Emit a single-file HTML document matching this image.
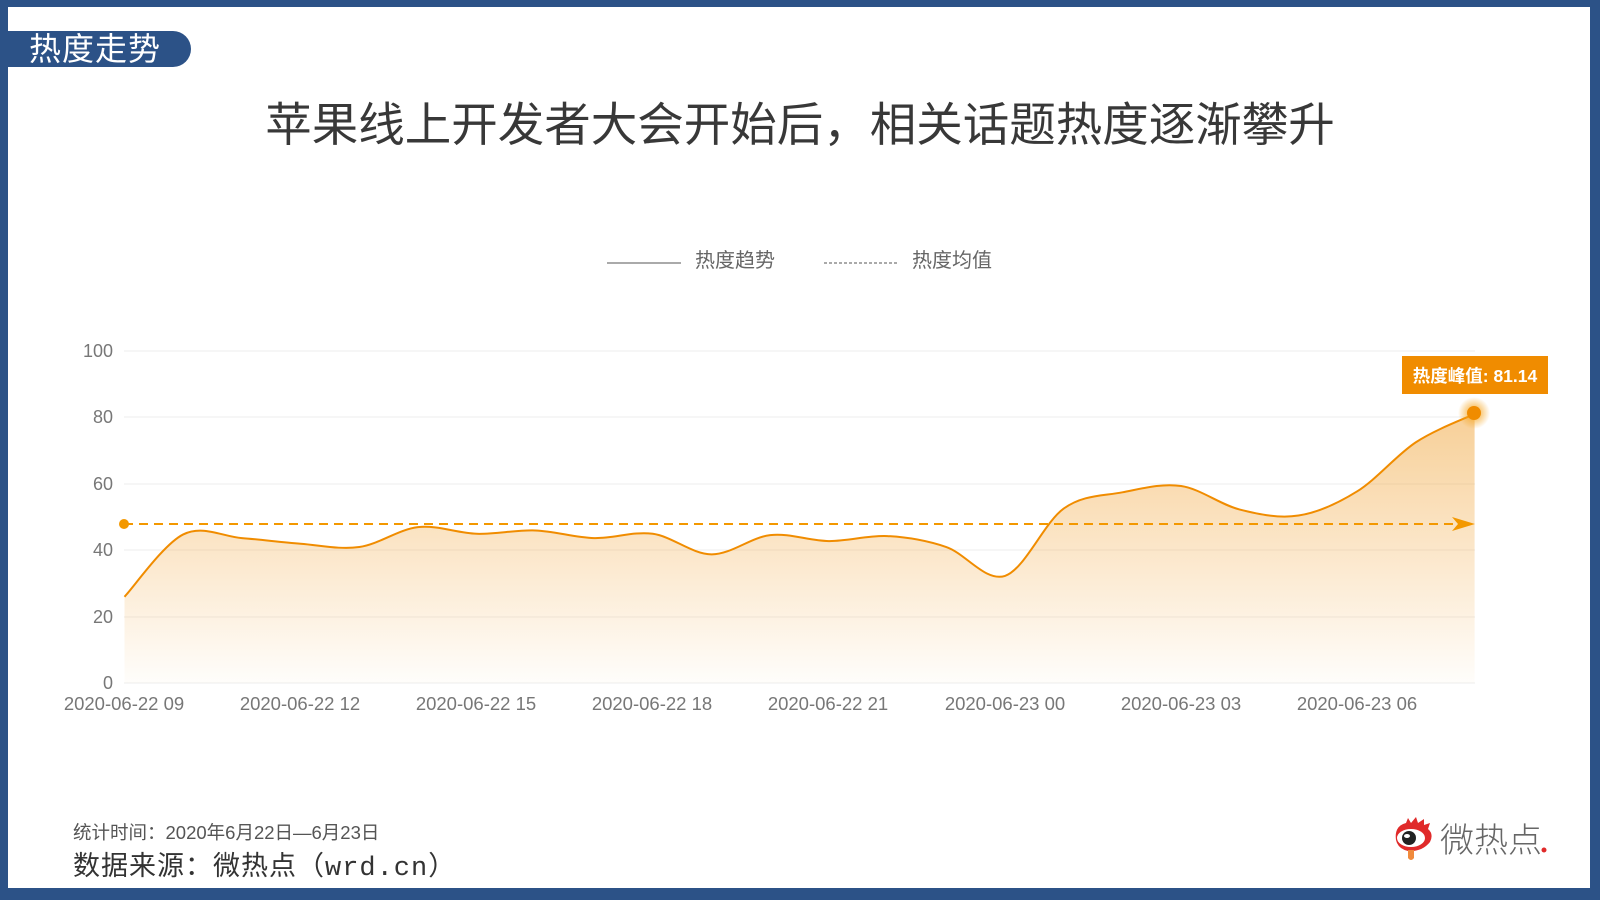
<!DOCTYPE html>
<html><head><meta charset="utf-8"><style>
*{margin:0;padding:0;box-sizing:border-box}
body{width:1600px;height:900px;background:#2c5287;position:relative;overflow:hidden;font-family:"Liberation Sans","Noto Sans CJK SC",sans-serif}
#page{position:absolute;left:8px;top:7px;width:1582px;height:881px;background:#fff}
.tag{position:absolute;left:8px;top:31px;width:183px;height:36px;background:#2c5287;border-radius:0 18px 18px 0;color:#fff;font-size:32px;line-height:36px;padding-left:21px;letter-spacing:1px}
.title{position:absolute;left:0;width:1600px;top:95px;text-align:center;font-size:46.5px;color:#383838;line-height:60px}
.leg{position:absolute;top:249px;font-size:20px;color:#666;line-height:24px}
.f1{position:absolute;left:73px;top:819px;font-size:18.5px;color:#555}
.f2{position:absolute;left:73px;top:844px;font-size:27px;color:#333;letter-spacing:1px}
</style></head><body>
<div id="page"></div>
<div class="tag">热度走势</div>
<div class="title">苹果线上开发者大会开始后，相关话题热度逐渐攀升</div>
<svg style="position:absolute;left:0;top:0" width="1600" height="900">
<defs>
<linearGradient id="g" x1="0" y1="0" x2="0" y2="1"><stop offset="0" stop-color="#f0a030" stop-opacity=".5"/><stop offset="1" stop-color="#f0a030" stop-opacity=".02"/></linearGradient>
<radialGradient id="glow"><stop offset=".4" stop-color="#f5a623" stop-opacity=".6"/><stop offset="1" stop-color="#f5a623" stop-opacity="0"/></radialGradient>
</defs>
<line x1="607" y1="263" x2="681" y2="263" stroke="#777" stroke-width="1.3"/>
<line x1="824" y1="263" x2="898" y2="263" stroke="#777" stroke-width="1.3" stroke-dasharray="3,2"/>
<g stroke="#eee" stroke-width="1">
<line x1="124" y1="351" x2="1475" y2="351"/><line x1="124" y1="417" x2="1475" y2="417"/><line x1="124" y1="484" x2="1475" y2="484"/><line x1="124" y1="550" x2="1475" y2="550"/><line x1="124" y1="617" x2="1475" y2="617"/><line x1="124" y1="683" x2="1475" y2="683"/>
</g>
<g font-size="18" fill="#777" text-anchor="end" font-family="Liberation Sans,sans-serif">
<text x="113" y="357">100</text><text x="113" y="423">80</text><text x="113" y="490">60</text><text x="113" y="556">40</text><text x="113" y="623">20</text><text x="113" y="689">0</text>
</g>
<g font-size="18.5" fill="#777" text-anchor="middle" font-family="Liberation Sans,sans-serif">
<text x="124" y="710">2020-06-22 09</text><text x="300" y="710">2020-06-22 12</text><text x="476" y="710">2020-06-22 15</text><text x="652" y="710">2020-06-22 18</text><text x="828" y="710">2020-06-22 21</text><text x="1005" y="710">2020-06-23 00</text><text x="1181" y="710">2020-06-23 03</text><text x="1357" y="710">2020-06-23 06</text>
</g>
<path id="area" fill="url(#g)"/>
<path id="line" fill="none" stroke="#f08c00" stroke-width="2"/>
<line x1="124" y1="524" x2="1462" y2="524" stroke="#f39800" stroke-width="2" stroke-dasharray="9,6"/>
<path d="M1452 517 L1475 524 L1452 531 L1458 524Z" fill="#f39800"/>
<circle cx="124" cy="524" r="5" fill="#f39800"/>
<circle cx="1474" cy="413" r="16" fill="url(#glow)"/>
<circle cx="1474" cy="413" r="7" fill="#f08c00"/>
<rect x="1402" y="356" width="146" height="38" fill="#f08c00"/>
<text x="1475" y="382" text-anchor="middle" font-size="17.5" font-weight="bold" fill="#fff">热度峰值: 81.14</text>
<g transform="translate(1392,820)">
<path d="M4 20 Q2 6 14 3 L16 -2 L19 3 L24 -3 L26 3 L32 -1 L32 5 L38 3 L36 9 Q42 14 38 22 Q30 32 16 31 Q6 29 4 20Z" fill="#e02a2a"/>
<ellipse cx="19" cy="18" rx="14" ry="9" fill="#fff"/>
<circle cx="17" cy="18" r="7" fill="#222"/>
<ellipse cx="15" cy="16" rx="3" ry="2" fill="#fff"/>
<path d="M16 30 L22 30 L22 38 Q19 42 16 38Z" fill="#f08a3c"/>
<text x="48" y="32" font-size="34" fill="#666" font-family="Noto Sans CJK SC,sans-serif" font-weight="300">微热点</text>
<circle cx="152" cy="30" r="2.5" fill="#e02a2a"/>
</g>
</svg>
<div class="leg" style="left:695px">热度趋势</div>
<div class="leg" style="left:912px">热度均值</div>
<div class="f1">统计时间：2020年6月22日—6月23日</div>
<div class="f2">数据来源：微热点（<span style="font-family:'Liberation Mono',monospace">wrd.cn</span>）</div>
<script>
var v=[26,44.8,43.7,42,41,47,45,46,43.7,45,38.8,44.6,42.8,44.3,41,32.3,52.6,57.5,59.4,52.3,50.5,57.8,72.6,81.14];
var p=v.map(function(a,i){return [124.5+58.7*i,683-a*3.316]});
var d="M"+p[0][0]+" "+p[0][1];
for(var i=0;i<p.length-1;i++){var a=p[i-1]||p[i],b=p[i],c=p[i+1],e=p[i+2]||c;
d+=" C"+(b[0]+(c[0]-a[0])/6)+" "+(b[1]+(c[1]-a[1])/6)+" "+(c[0]-(e[0]-b[0])/6)+" "+(c[1]-(e[1]-b[1])/6)+" "+c[0]+" "+c[1];}
document.getElementById("line").setAttribute("d",d);
document.getElementById("area").setAttribute("d",d+" L"+p[23][0]+" 683 L124.5 683Z");
</script>
</body></html>
